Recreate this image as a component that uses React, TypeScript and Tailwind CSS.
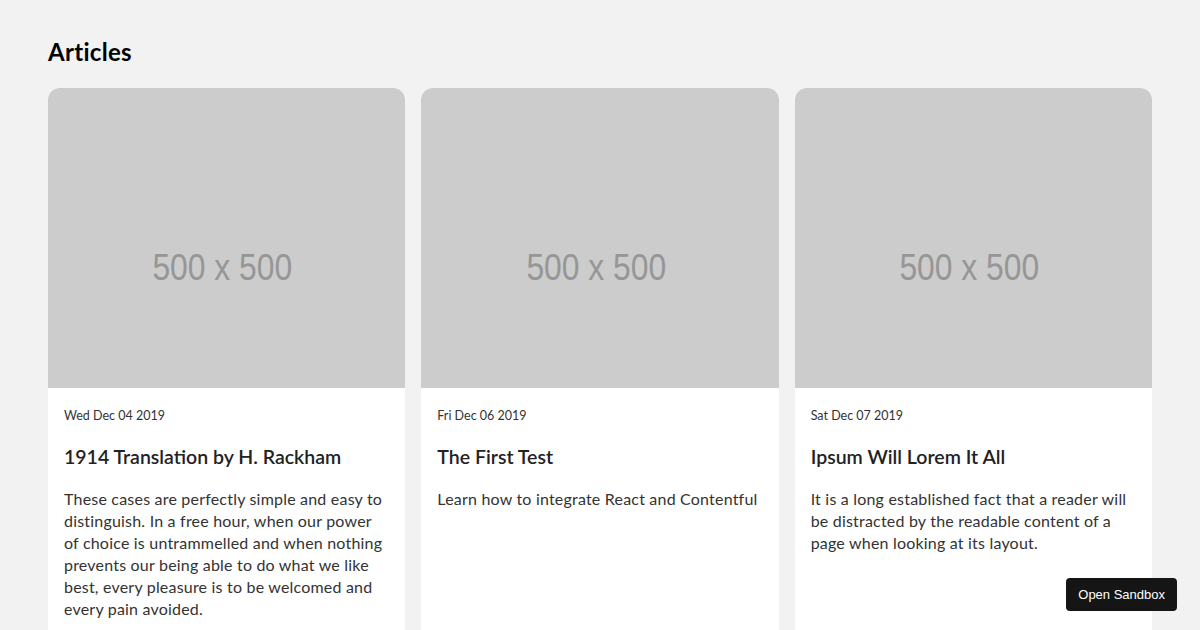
const articles = [
  {
    date: "Wed Dec 04 2019",
    title: "1914 Translation by H. Rackham",
    body: "These cases are perfectly simple and easy to distinguish. In a free hour, when our power of choice is untrammelled and when nothing prevents our being able to do what we like best, every pleasure is to be welcomed and every pain avoided.",
  },
  {
    date: "Fri Dec 06 2019",
    title: "The First Test",
    body: "Learn how to integrate React and Contentful",
  },
  {
    date: "Sat Dec 07 2019",
    title: "Ipsum Will Lorem It All",
    body: "It is a long established fact that a reader will be distracted by the readable content of a page when looking at its layout.",
  },
];

export default function App() {
  return (
    <div
      className="min-h-screen bg-[#f2f2f2] px-12 pt-9 text-[#333]"
      style={{ fontFamily: "Lato, 'Noto Sans', sans-serif" }}
    >
      {/* Header */}
      <h1 className="text-2xl font-bold text-black leading-8 tracking-[0.3px]">Articles</h1>

      {/* Article grid */}
      <div className="mt-5 grid grid-cols-3 gap-4">
        {articles.map((a) => (
          <div key={a.title} className="rounded-xl overflow-hidden bg-white min-h-[600px]">
            <div className="h-[300px] bg-[#cccccc] flex items-center justify-center">
              <span
                className="text-[37px] leading-none text-[#969696] -ml-2 mt-[58px] scale-x-[0.86]"
                style={{ fontFamily: "'Liberation Sans', Arial, sans-serif" }}
              >
                500 x 500
              </span>
            </div>
            <div className="px-4 pt-5">
              <div className="text-[12.5px] leading-4 text-[#333]">{a.date}</div>
              <h2 className="mt-[21px] text-[19.5px] font-semibold leading-6 text-[#222]">{a.title}</h2>
              <p className="mt-[19px] text-[16px] leading-[22px] text-[#333] tracking-[0.2px]">{a.body}</p>
            </div>
          </div>
        ))}
      </div>

      {/* Floating button */}
      <button
        className="fixed right-[23px] bottom-[19px] h-[33px] px-3 rounded bg-[#151515] text-white text-[13px]"
        style={{ fontFamily: "'Liberation Sans', Arial, sans-serif" }}
      >
        Open Sandbox
      </button>
    </div>
  );
}
